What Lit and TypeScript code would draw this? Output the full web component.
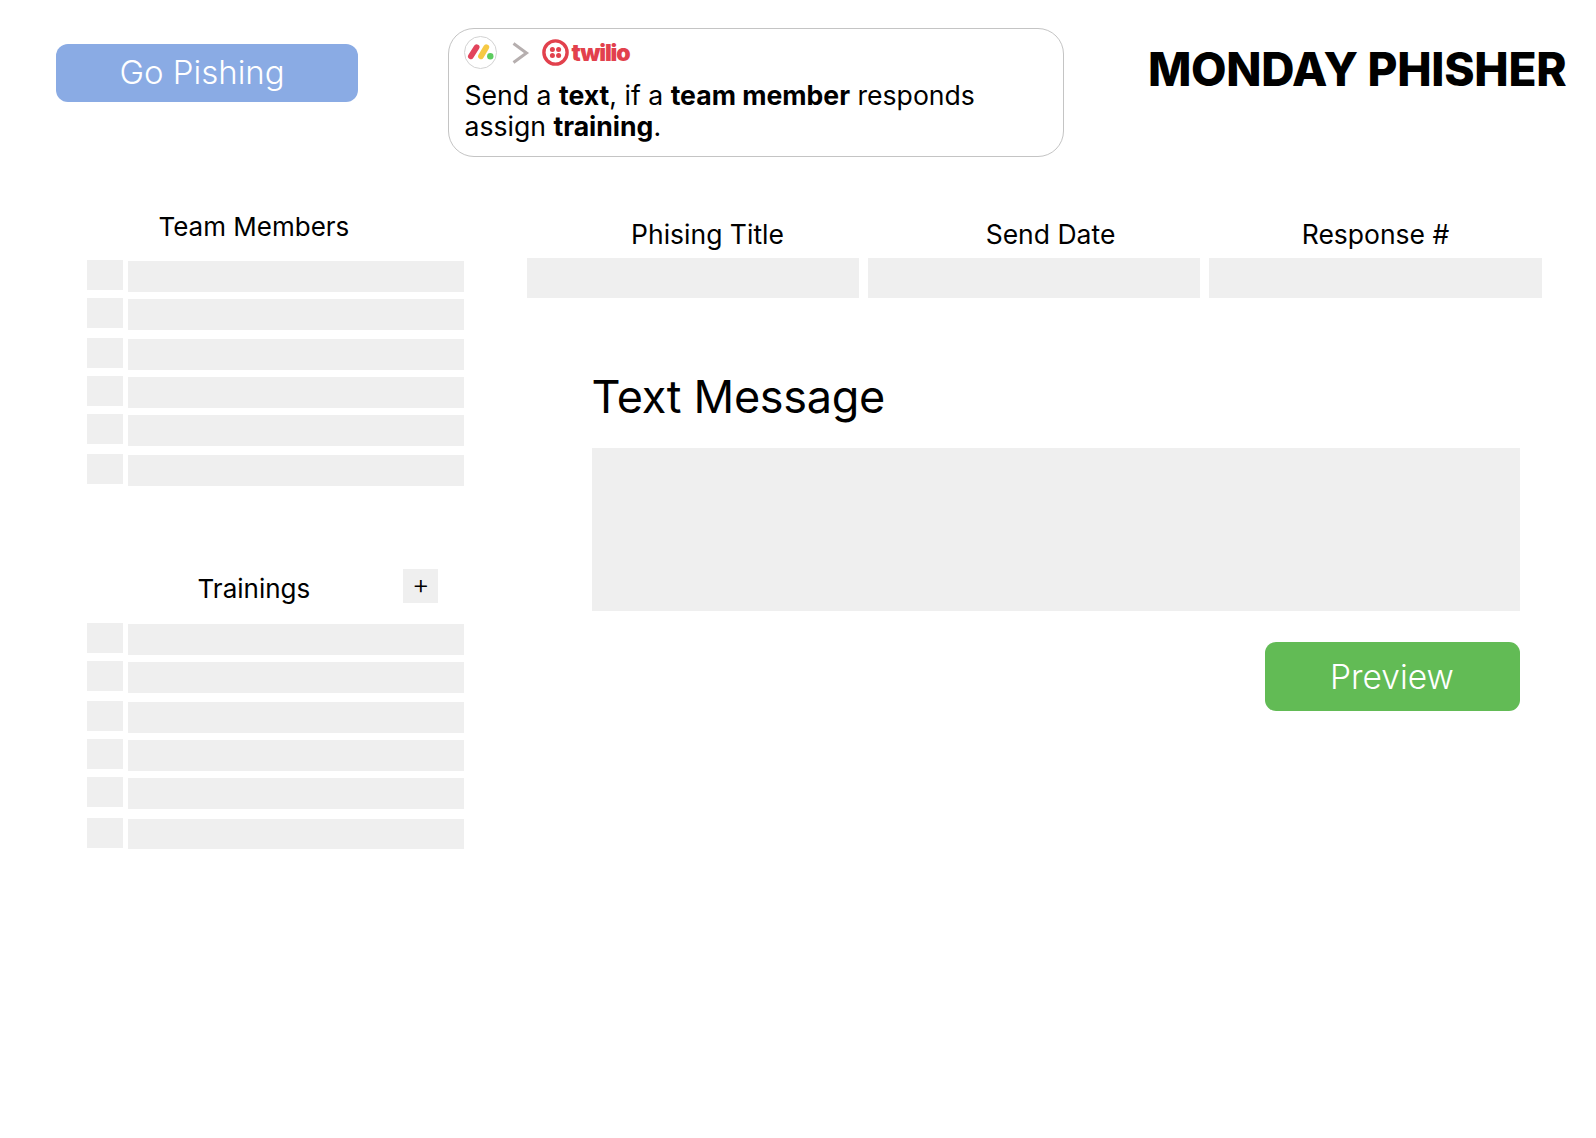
import { LitElement, html, css } from "lit";
import { customElement } from "lit/decorators.js";

const WIDE_AFTER = [false, true, false, false, true, false];

@customElement("app-root")
export class AppRoot extends LitElement {
  static styles = css`
    :host { display: block; width: 1596px; height: 1138px; background: #fff; font-family: Inter, "Liberation Sans", sans-serif; color: #000; overflow: hidden; }
    .top { display: flex; align-items: flex-start; height: 157px; padding-top: 28px; box-sizing: border-box; }
    .go { margin: 16px 0 0 56.4px; width: 302px; height: 58px; border-radius: 12px; background: #8aabe4; color: #fff; font-size: 33px; font-weight: 300; display: flex; align-items: center; padding: 0 0 3px 63px; box-sizing: border-box; }
    .bubble { margin-left: 89.6px; width: 616px; height: 129px; box-sizing: border-box; border: 1px solid #c4c4c4; border-radius: 26px; padding: 7px 15.5px; }
    .logos { display: flex; align-items: center; height: 33px; }
    .logos svg { display: block; flex: none; }
    .chevron { margin-left: 15px; }
    .mark { margin-left: 12px; }
    .bubble p { margin: 10.5px 0 0; font-size: 26.6px; line-height: 31px; font-weight: 400; }
    .bubble b { font-weight: 700; }
    .brand { color: #e2414d; font-size: 23px; font-weight: 900; letter-spacing: -1.1px; margin-left: 2px; line-height: 32px; }
    .title { margin: 15px 0 0 84px; font-size: 46px; font-weight: 800; line-height: 52px; white-space: nowrap; letter-spacing: -0.3px; }
    .main { display: flex; }
    .left { width: 527px; padding: 54px 0 0 87.4px; box-sizing: border-box; }
    .head { width: 333px; text-align: center; font-size: 26px; line-height: 32px; }
    .rows { display: flex; flex-direction: column; margin-top: 17px; }
    .row { display: flex; gap: 4.6px; margin-bottom: 6.4px; }
    .row.wide { margin-bottom: 8.6px; }
    .thumb { width: 35.6px; height: 30px; background: #efefef; }
    .bar { width: 336.4px; height: 30.6px; margin-top: 1px; background: #efefef; }
    .training-head { position: relative; margin-top: 76.5px; height: 37.5px; }
    .training-head .head { padding-top: 4.5px; }
    .plus { position: absolute; left: 316px; top: 0; width: 35px; height: 34px; background: #efefef; display: flex; align-items: center; justify-content: center; font-size: 27px; font-weight: 300; line-height: 1; padding-bottom: 3px; box-sizing: border-box; }
    .right { flex: 1; padding-top: 61px; }
    .cols { display: grid; grid-template-columns: 332px 332px 333px; column-gap: 9px; }
    .col-head { font-size: 26.5px; line-height: 32px; text-align: center; }
    .c1 { padding-left: 29px; }
    .c2 { padding-left: 33px; }
    .cell { height: 40px; margin-top: 8px; background: #efefef; }
    .message { margin: 70px 0 0 64.5px; width: 928px; }
    h2 { margin: 0; font-size: 45px; font-weight: 400; line-height: 58px; letter-spacing: -0.3px; }
    .area { height: 163px; margin-top: 22px; background: #efefef; }
    .foot { display: flex; justify-content: flex-end; margin-top: 31px; }
    .preview { width: 255px; height: 69px; border-radius: 11px; background: #62bb55; color: #fff; font-size: 33.5px; font-weight: 300; display: flex; align-items: center; justify-content: center; }
  `;

  private rows() {
    return WIDE_AFTER.map(
      (w) => html`<div class="row ${w ? "wide" : ""}"><div class="thumb"></div><div class="bar"></div></div>`
    );
  }

  render() {
    return html`
      <div class="top">
        <div class="go">Go Pishing</div>
        <div class="bubble">
          <div class="logos">
            <svg width="33" height="33" viewBox="0 0 33 33">
              <circle cx="16.5" cy="16.5" r="16" fill="#fff" stroke="#d2d2d2"></circle>
              <path d="M6.9 20.3 L12.6 11.3" stroke="#e2445c" stroke-width="5.8" stroke-linecap="round"></path>
              <path d="M17 20.3 L22.3 11.3" stroke="#f6c944" stroke-width="5.8" stroke-linecap="round"></path>
              <circle cx="26.3" cy="20.2" r="3.2" fill="#5ccc5f"></circle>
            </svg>
            <svg class="chevron" width="18" height="22" viewBox="0 0 18 22">
              <path d="M1.5 1.5 L14.5 11 L1.5 20.5" fill="none" stroke="#b6afaf" stroke-width="3"></path>
            </svg>
            <svg class="mark" width="27" height="27" viewBox="0 0 27 27">
              <circle cx="13.5" cy="13.5" r="11.6" fill="none" stroke="#e2414d" stroke-width="3.4"></circle>
              <circle cx="10.4" cy="10.4" r="2.5" fill="#e2414d"></circle>
              <circle cx="16.6" cy="10.4" r="2.5" fill="#e2414d"></circle>
              <circle cx="10.4" cy="16.6" r="2.5" fill="#e2414d"></circle>
              <circle cx="16.6" cy="16.6" r="2.5" fill="#e2414d"></circle>
            </svg>
            <span class="brand">twilio</span>
          </div>
          <p>Send a <b>text</b>, if a <b>team member</b> responds<br />assign <b>training</b>.</p>
        </div>
        <div class="title">MONDAY PHISHER</div>
      </div>
      <div class="main">
        <div class="left">
          <div class="head">Team Members</div>
          <div class="rows">${this.rows()}</div>
          <div class="training-head">
            <div class="head">Trainings</div>
            <div class="plus">+</div>
          </div>
          <div class="rows">${this.rows()}</div>
        </div>
        <div class="right">
          <div class="cols">
            <div class="col-head c1">Phising Title</div>
            <div class="col-head c2">Send Date</div>
            <div class="col-head">Response #</div>
            <div class="cell"></div>
            <div class="cell"></div>
            <div class="cell"></div>
          </div>
          <div class="message">
            <h2>Text Message</h2>
            <div class="area"></div>
            <div class="foot"><div class="preview">Preview</div></div>
          </div>
        </div>
      </div>
    `;
  }
}
